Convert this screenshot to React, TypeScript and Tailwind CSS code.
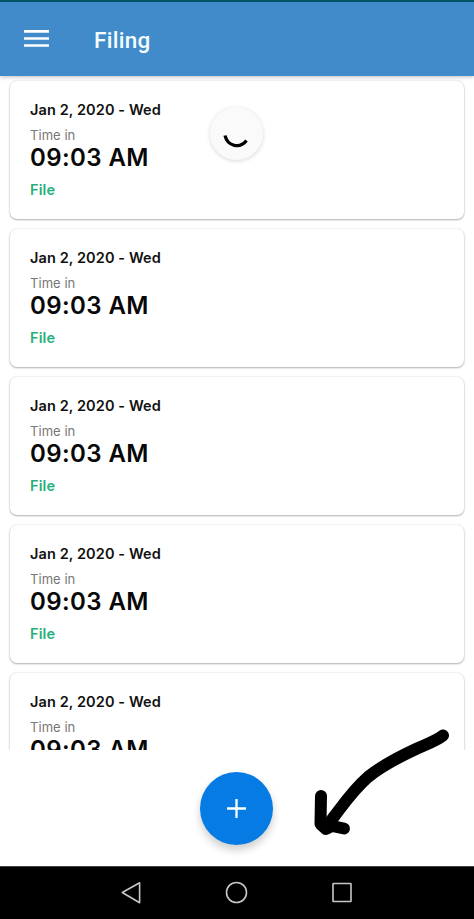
const entries = [1, 2, 3, 4, 5].map((id) => ({
    id,
    date: "Jan 2, 2020 - Wed",
    label: "Time in",
    time: "09:03 AM",
    action: id < 5 ? "File" : null,
}));

function EntryCard({ entry }: { entry: typeof entries[0] }) {
    return (
        <article className="h-[138px] shrink-0 rounded-[7px] bg-white px-5 pt-[19px] shadow-[0_1px_2px_rgba(0,0,0,0.28),0_0_2px_rgba(0,0,0,0.16)]">
            <h2 className="w-fit whitespace-nowrap text-[14.5px] leading-5 font-semibold tracking-[0.1px] text-[#111]">
                {entry.date}
            </h2>
            <p className="mt-1.5 w-fit whitespace-nowrap text-[13px] leading-[18px] tracking-[0.05px] text-[#777]">
                {entry.label}
            </p>
            <p className="mt-px w-fit whitespace-nowrap text-[24px] leading-[26px] font-semibold tracking-[0.4px] text-[#080808]">
                {entry.time}
            </p>
            {entry.action && (
                <button className="mt-[9px] block text-[14.5px] leading-5 font-semibold tracking-[0.15px] text-[#25b07b]">
                    {entry.action}
                </button>
            )}
        </article>
    );
}

function Spinner() {
    return (
        <div className="absolute top-[31px] left-[210px] size-[53px] rounded-full bg-[#fafafa] shadow-[0_1px_4px_rgba(0,0,0,0.16)]">
            <svg viewBox="0 0 53 53" className="size-full" fill="none" stroke="#000" strokeWidth="3.3">
                <path d="M15 28.5C17.5 39.5 30 42 36.5 33.5" />
            </svg>
        </div>
    );
}

export default function App() {
    return (
        <div className="relative flex h-[919px] w-[474px] flex-col overflow-hidden bg-white font-['Inter',sans-serif]">
            <div className="h-0.5 shrink-0 bg-[#02586a]" />
            <header className="relative z-10 flex h-[74px] shrink-0 items-center bg-[#428bca] pl-[20px] shadow-[0_1px_4px_rgba(0,0,0,0.25)]">
                <button aria-label="Menu" className="text-white">
                    <svg width="32" height="32" viewBox="0 0 32 32" stroke="currentColor" strokeWidth="2.7">
                        <path d="M4 8.3h25M4 15.5h25M4 22.5h25" />
                    </svg>
                </button>
                <h1 className="ml-[42px] pt-px font-['Roboto',sans-serif] text-[22.5px] leading-7 font-medium tracking-[0.3px] text-[#f4fdff]">
                    Filing
                </h1>
            </header>

            <main className="relative h-[674px] shrink-0 overflow-hidden">
                <div className="flex flex-col gap-2.5 px-2.5 pt-[5px]">
                    {entries.map((entry) => (
                        <EntryCard key={entry.id} entry={entry} />
                    ))}
                </div>
                <Spinner />
            </main>

            <div className="flex h-[116px] shrink-0 justify-center pt-[21.5px] pr-[1px]">
                <button
                    aria-label="Add filing"
                    className="grid size-[73px] place-items-center rounded-full bg-[#077be4] text-white shadow-[0_5px_9px_rgba(0,0,0,0.2)]"
                >
                    <svg width="19" height="19" viewBox="0 0 19 19" stroke="currentColor" strokeWidth="2.3">
                        <path d="M9.5 0v19M0 9.5h19" />
                    </svg>
                </button>
            </div>

            {/* Hand-drawn pointer to the add button */}
            <svg
                className="pointer-events-none absolute top-[710px] left-[290px]"
                width="184"
                height="140"
                viewBox="0 0 184 140"
                fill="none"
                stroke="#000"
                strokeWidth="12"
                strokeLinecap="round"
                strokeLinejoin="round"
            >
                <path d="M153 25.5C146 31 137 34 126 39C111 46 89 58 78 67C63 80 53 95 43 108L36 118" />
                <path d="M31 86L30.5 114L36 119L42 116L54 118.5" />
            </svg>

            <nav className="h-[53px] shrink-0 border-t border-[#444] bg-black">
                <svg width="474" height="52" viewBox="0 0 474 52" fill="none" stroke="#c7c7c7" strokeWidth="1.6" strokeLinejoin="round">
                    <path d="M122.3 25.5L139.6 15.8V35.7Z" />
                    <circle cx="236.5" cy="25.5" r="10" />
                    <rect x="333" y="16.5" width="18" height="18" rx="0.5" />
                </svg>
            </nav>
        </div>
    );
}
